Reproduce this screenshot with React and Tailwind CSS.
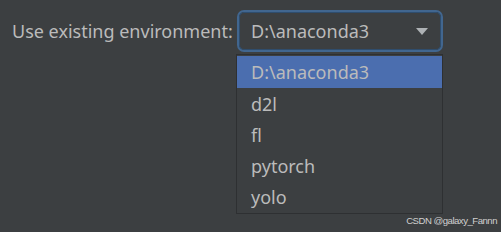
import React from "react";

const envs = ["D:\\anaconda3", "d2l", "fl", "pytorch", "yolo"];

export default function App() {
  return (
    <div
      className="relative w-[501px] h-[232px] bg-[#3c3f41] text-[#bbbbbb] overflow-hidden"
      style={{ fontFamily: '"Noto Sans", "Open Sans", sans-serif' }}
    >
      <div className="flex items-center pl-[12px] pt-[10px]">
        <span className="text-[18px] leading-none w-[225px]">Use existing environment:</span>
        <div className="w-[206px] h-[42px] rounded-[7px] border-2 border-[#41668f] p-0">
          <div className="h-full rounded-[5px] border border-[#2f4d6d] flex items-center pl-[11px] pr-[12px]">
            <span className="flex-1 text-[18px] leading-none">D:\anaconda3</span>
            <svg width="12" height="7" viewBox="0 0 12 7">
              <polygon points="0,0 12,0 6,7" fill="#aeb2b5" />
            </svg>
          </div>
        </div>
      </div>

      {/* popup list */}
      <div className="absolute left-[236px] top-[54px] w-[207px] border border-[#2e3032] bg-[#3c3f41] py-[1px]">
        {envs.map((e, i) => (
          <div
            key={e}
            className={`flex items-center pl-[14px] text-[18px] leading-none ${
              i === 0 ? "bg-[#4b6eaf] h-[32px]" : "h-[31px]"
            }`}
          >
            {e}
          </div>
        ))}
      </div>

      <div
        className="absolute right-[4px] bottom-[6px] text-[9.6px] tracking-[-0.5px] leading-none text-[#d0d0d0]"
        style={{ fontFamily: '"Liberation Sans", sans-serif' }}
      >
        CSDN @galaxy_Fannn
      </div>
    </div>
  );
}
